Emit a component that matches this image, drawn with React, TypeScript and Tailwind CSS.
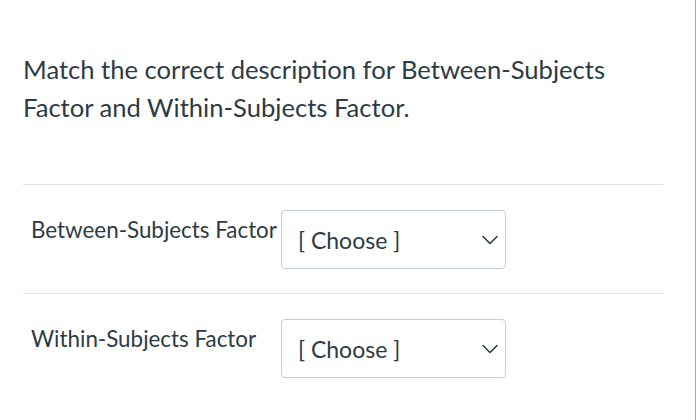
import React from "react";

function Chevron() {
  return (
    <svg width="16" height="10" viewBox="0 0 16 10" fill="none">
      <path d="M1 1.5 L8 8.5 L15 1.5" stroke="#2d3b45" strokeWidth="1.6" strokeLinecap="round" strokeLinejoin="round" />
    </svg>
  );
}

function Select() {
  return (
    <div className="w-[225px] h-[59px] border border-[#c7cdd1] rounded-[4px] bg-white flex items-center justify-between pl-[16px] pr-[7px] pt-[1px]">
      <span className="text-[23px] leading-[30px] text-[#2d3b45]">[ Choose ]</span>
      <Chevron />
    </div>
  );
}

function Row({ label }: { label: string }) {
  return (
    <div className="flex pt-[25px] pb-[24px]">
      <div className="w-[258px] pl-[8px] pt-[5px] text-[22.4px] leading-[30px] text-[#2d3b45] whitespace-nowrap">{label}</div>
      <Select />
    </div>
  );
}

export default function App() {
  return (
    <div className="w-[698px] h-[420px] bg-white overflow-hidden font-['Lato',sans-serif]">
      <div className="w-[696px] h-[420px] border-r border-[#a9a9a9] pl-[23px] pt-[50px]">
        <div className="w-[640px]">
          <p className="text-[25.6px] leading-[38px] text-[#2d3b45]">
            Match the correct description for Between-Subjects Factor and Within-Subjects Factor.
          </p>
          <div className="mt-[58px] border-t border-[#e0e0e0]" />
          <Row label="Between-Subjects Factor" />
          <div className="border-t border-[#e0e0e0]" />
          <Row label="Within-Subjects Factor" />
        </div>
      </div>
    </div>
  );
}
